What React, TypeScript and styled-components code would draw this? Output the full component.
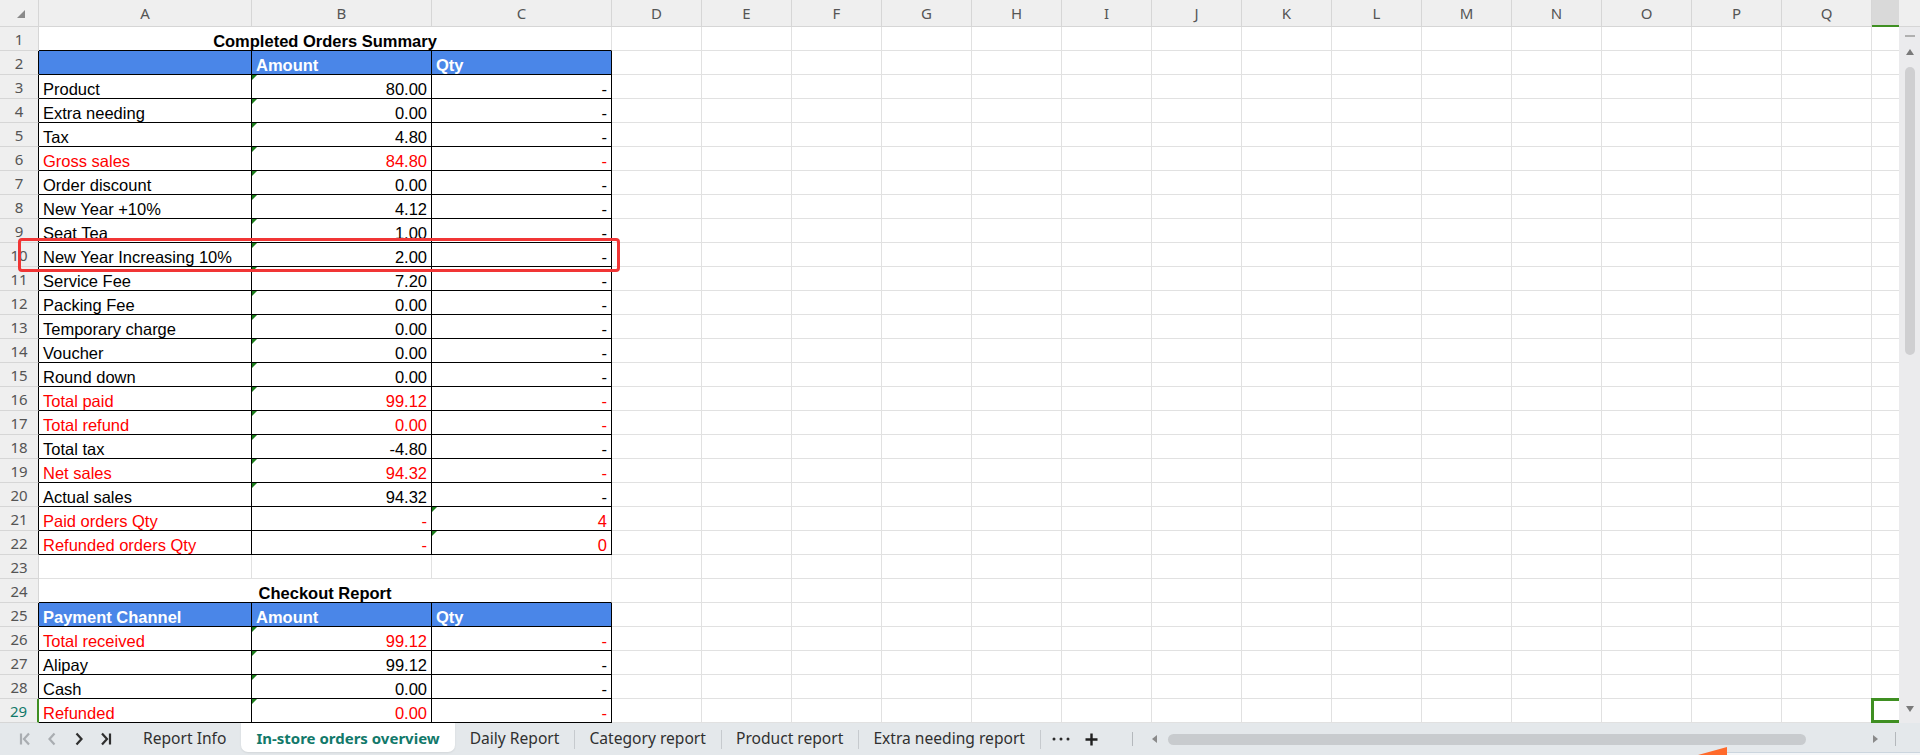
import React from "react";
import styled, { createGlobalStyle, css } from "styled-components";

const GRID = "#e1e1e1";
const BLACK = "#000000";
const HEAD_BG = "#efefef";
const HEAD_LINE = "#d6d6d6";
const BLUE = "#4a86e8";
const RED = "#ff0000";
const GREEN = "#3f8f22";
const TEAL = "#12796a";

const GlobalStyle = createGlobalStyle`
  html, body {
    margin: 0;
    padding: 0;
    background: #ffffff;
    overflow: hidden;
  }
  body {
    font-family: "Liberation Sans", Arial, sans-serif;
  }
`;

const Window = styled.div`
  position: relative;
  width: 1920px;
  height: 755px;
  display: flex;
  flex-direction: column;
  overflow: hidden;
`;

const SheetArea = styled.div`
  display: flex;
  height: 723px;
`;

const Grid = styled.div`
  display: grid;
  grid-template-columns: 39px 213px 180px 180px repeat(14, 90px) 27px;
  grid-template-rows: 27px repeat(29, 24px);
  width: 1899px;
  overflow: hidden;
`;

const Corner = styled.div`
  box-sizing: border-box;
  background: ${HEAD_BG};
  border-right: 1px solid ${HEAD_LINE};
  border-bottom: 1px solid ${HEAD_LINE};
  position: relative;

  &::after {
    content: "";
    position: absolute;
    left: 17px;
    top: 10px;
    width: 0;
    height: 0;
    border-left: 8px solid transparent;
    border-bottom: 8px solid #8a8a8a;
  }
`;

const ColHead = styled.div<{ $selected?: boolean }>`
  box-sizing: border-box;
  display: flex;
  align-items: center;
  justify-content: center;
  background: ${(p) => (p.$selected ? "#d9d9d9" : HEAD_BG)};
  border-right: ${(p) => (p.$selected ? "none" : `1px solid ${HEAD_LINE}`)};
  border-bottom: ${(p) => (p.$selected ? `2px solid ${GREEN}` : `1px solid ${HEAD_LINE}`)};
  font-family: "Noto Sans", "Open Sans", sans-serif;
  font-size: 15px;
  color: #555555;
`;

const RowHead = styled.div<{ $edge?: string; $wide?: boolean; $active?: boolean }>`
  box-sizing: border-box;
  display: flex;
  align-items: center;
  justify-content: center;
  background: ${HEAD_BG};
  border-right: ${(p) => (p.$wide ? 2 : 1)}px solid ${(p) => p.$edge ?? HEAD_LINE};
  border-bottom: 1px solid ${HEAD_LINE};
  font-family: "Noto Sans", "Open Sans", sans-serif;
  font-size: 15px;
  color: ${(p) => (p.$active ? TEAL : "#555555")};
`;

type Align = "left" | "right" | "center";

const Cell = styled.div<{
  $right?: string;
  $bottom?: string;
  $bg?: string;
  $align?: Align;
  $red?: boolean;
  $bold?: boolean;
  $white?: boolean;
  $span?: number;
  $open?: boolean;
}>`
  box-sizing: border-box;
  position: relative;
  display: flex;
  align-items: flex-end;
  justify-content: ${(p) =>
    p.$align === "right" ? "flex-end" : p.$align === "center" ? "center" : "flex-start"};
  padding: 0 4px 0 4px;
  background: ${(p) => p.$bg ?? "#ffffff"};
  border-right: ${(p) => (p.$open ? "none" : `1px solid ${p.$right ?? GRID}`)};
  border-bottom: 1px solid ${(p) => p.$bottom ?? GRID};
  font-size: 16.5px;
  line-height: 18px;
  font-weight: ${(p) => (p.$bold ? 700 : 400)};
  color: ${(p) => (p.$white ? "#ffffff" : p.$red ? RED : "#000000")};
  white-space: nowrap;
  overflow: visible;
  ${(p) =>
    p.$span &&
    css`
      grid-column: span ${p.$span};
    `}
`;

const TextMark = styled.span`
  position: absolute;
  left: 0;
  top: 0;
  width: 0;
  height: 0;
  border-top: 5px solid #1b7d1b;
  border-right: 5px solid transparent;
`;

const Selection = styled.span`
  position: absolute;
  left: -1px;
  top: -1px;
  right: -3px;
  bottom: -1px;
  border: 3px solid ${GREEN};
  pointer-events: none;
`;

const VScroll = styled.div`
  width: 21px;
  display: flex;
  flex-direction: column;
`;

const VScrollHead = styled.div`
  box-sizing: border-box;
  height: 27px;
  background: ${HEAD_BG};
  border-bottom: 1px solid ${HEAD_LINE};
`;

const VTrack = styled.div`
  flex: 1;
  background: #ebebed;
  display: flex;
  flex-direction: column;
  align-items: center;
`;

const SplitDash = styled.div`
  width: 10px;
  height: 2px;
  margin-top: 8px;
  background: #b0b0b0;
`;

const Arrow = styled.div<{ $dir: "up" | "down" | "left" | "right" }>`
  width: 0;
  height: 0;
  ${(p) =>
    p.$dir === "up"
      ? css`
          border-left: 4px solid transparent;
          border-right: 4px solid transparent;
          border-bottom: 6px solid #7a7a7a;
        `
      : p.$dir === "down"
      ? css`
          border-left: 4px solid transparent;
          border-right: 4px solid transparent;
          border-top: 6px solid #7a7a7a;
        `
      : p.$dir === "left"
      ? css`
          border-top: 4px solid transparent;
          border-bottom: 4px solid transparent;
          border-right: 5px solid #8a8a8a;
        `
      : css`
          border-top: 4px solid transparent;
          border-bottom: 4px solid transparent;
          border-left: 5px solid #8a8a8a;
        `}
`;

const UpArrow = styled(Arrow)`
  margin-top: 12px;
`;

const VThumb = styled.div`
  width: 10px;
  height: 288px;
  margin-top: 12px;
  border-radius: 5px;
  background: #cfcfd1;
`;

const Spacer = styled.div`
  flex: 1;
`;

const DownArrow = styled(Arrow)`
  margin-bottom: 11px;
`;

const TabBar = styled.div`
  height: 32px;
  display: flex;
  align-items: flex-start;
  background: #e4e8eb;
  font-family: "Noto Sans", "Open Sans", sans-serif;
`;

const Nav = styled.div`
  display: flex;
  padding-left: 11px;
  height: 32px;
  align-items: center;
`;

const NavBtn = styled.div<{ $off?: boolean }>`
  width: 27px;
  height: 32px;
  display: flex;
  align-items: center;
  justify-content: center;
  color: ${(p) => (p.$off ? "#a9adb1" : "#2f2f2f")};
`;

const Tabs = styled.div`
  display: flex;
  margin-left: 9px;
`;

const Tab = styled.div<{ $active?: boolean; $sep?: boolean }>`
  position: relative;
  height: 29px;
  padding: 0 15px;
  display: flex;
  align-items: center;
  font-size: 15.6px;
  color: #303030;
  white-space: nowrap;

  ${(p) =>
    p.$active &&
    css`
      background: #ffffff;
      border-radius: 0 0 7px 7px;
      color: ${TEAL};
      font-size: 15px;
      font-weight: 700;
      box-shadow: 0 1px 2px rgba(0, 0, 0, 0.08);
    `}

  ${(p) =>
    p.$sep &&
    css`
      &::after {
        content: "";
        position: absolute;
        right: -1px;
        top: 7px;
        width: 1px;
        height: 19px;
        background: #c6cace;
      }
    `}
`;

const TabTool = styled.div<{ $gap: number }>`
  height: 32px;
  display: flex;
  align-items: center;
  margin-left: ${(p) => p.$gap}px;
  color: #2a2a2a;
`;

const HScroll = styled.div`
  margin-left: auto;
  width: 795px;
  height: 32px;
  display: flex;
  align-items: center;
`;

const Divider = styled.div<{ $gap: number }>`
  width: 1px;
  height: 14px;
  margin-left: ${(p) => p.$gap}px;
  background: #b4b8bc;
`;

const HThumb = styled.div`
  width: 638px;
  height: 11px;
  margin-left: 11px;
  border-radius: 6px;
  background: #c8cbce;
`;

const LeftArrow = styled(Arrow)`
  margin-left: 19px;
`;

const RightArrow = styled(Arrow)`
  margin-left: 67px;
`;

const Highlight = styled.div`
  position: absolute;
  left: 18px;
  top: 238px;
  width: 602px;
  height: 34px;
  box-sizing: border-box;
  border: 3px solid #f13535;
  border-radius: 4px;
  pointer-events: none;
`;

const Pointer = styled.svg`
  position: absolute;
  left: 1696px;
  top: 746px;
`;

const PopupEdge = styled.div`
  position: absolute;
  left: 1727px;
  top: 752px;
  width: 193px;
  height: 3px;
  border-top: 1px solid #cbd5de;
  background: #f4f6f8;
`;

type Kind = "title" | "head" | "data" | "blank";

interface SheetRow {
  kind: Kind;
  a?: string;
  b?: string;
  c?: string;
  red?: boolean;
  mark?: "b" | "c";
}

const rows: SheetRow[] = [
  { kind: "title", a: "Completed Orders Summary" },
  { kind: "head", a: "", b: "Amount", c: "Qty" },
  { kind: "data", a: "Product", b: "80.00", c: "-", mark: "b" },
  { kind: "data", a: "Extra needing", b: "0.00", c: "-", mark: "b" },
  { kind: "data", a: "Tax", b: "4.80", c: "-", mark: "b" },
  { kind: "data", a: "Gross sales", b: "84.80", c: "-", mark: "b", red: true },
  { kind: "data", a: "Order discount", b: "0.00", c: "-", mark: "b" },
  { kind: "data", a: "New Year +10%", b: "4.12", c: "-", mark: "b" },
  { kind: "data", a: "Seat Tea", b: "1.00", c: "-", mark: "b" },
  { kind: "data", a: "New Year Increasing 10%", b: "2.00", c: "-", mark: "b" },
  { kind: "data", a: "Service Fee", b: "7.20", c: "-", mark: "b" },
  { kind: "data", a: "Packing Fee", b: "0.00", c: "-", mark: "b" },
  { kind: "data", a: "Temporary charge", b: "0.00", c: "-", mark: "b" },
  { kind: "data", a: "Voucher", b: "0.00", c: "-", mark: "b" },
  { kind: "data", a: "Round down", b: "0.00", c: "-", mark: "b" },
  { kind: "data", a: "Total paid", b: "99.12", c: "-", mark: "b", red: true },
  { kind: "data", a: "Total refund", b: "0.00", c: "-", mark: "b", red: true },
  { kind: "data", a: "Total tax", b: "-4.80", c: "-", mark: "b" },
  { kind: "data", a: "Net sales", b: "94.32", c: "-", mark: "b", red: true },
  { kind: "data", a: "Actual sales", b: "94.32", c: "-", mark: "b" },
  { kind: "data", a: "Paid orders Qty", b: "-", c: "4", mark: "c", red: true },
  { kind: "data", a: "Refunded orders Qty", b: "-", c: "0", mark: "c", red: true },
  { kind: "blank" },
  { kind: "title", a: "Checkout Report" },
  { kind: "head", a: "Payment Channel", b: "Amount", c: "Qty" },
  { kind: "data", a: "Total received", b: "99.12", c: "-", mark: "b", red: true },
  { kind: "data", a: "Alipay", b: "99.12", c: "-", mark: "b" },
  { kind: "data", a: "Cash", b: "0.00", c: "-", mark: "b" },
  { kind: "data", a: "Refunded", b: "0.00", c: "-", mark: "b", red: true },
];

const letters = ["A", "B", "C", "D", "E", "F", "G", "H", "I", "J", "K", "L", "M", "N", "O", "P", "Q"];
const emptyCols = letters.slice(3);

const sheets = [
  "Report Info",
  "In-store orders overview",
  "Daily Report",
  "Category report",
  "Product report",
  "Extra needing report",
];
const activeSheet = 1;

function NavIcon({ kind }: { kind: "first" | "prev" | "next" | "last" }) {
  const paths: Record<string, string[]> = {
    first: ["M3 1.5v11", "M11 1.5L6 7l5 5.5"],
    prev: ["M9.5 1.5L4.5 7l5 5.5"],
    next: ["M4.5 1.5L9.5 7l-5 5.5"],
    last: ["M3 1.5L8 7l-5 5.5", "M11 1.5v11"],
  };
  return (
    <svg width="14" height="14" viewBox="0 0 14 14" fill="none" stroke="currentColor" strokeWidth="2.2">
      {paths[kind].map((d) => (
        <path key={d} d={d} />
      ))}
    </svg>
  );
}

function SheetRowView({ row, n }: { row: SheetRow; n: number }) {
  const inTable = row.kind === "head" || row.kind === "data";
  const last = n === 29;
  const edge = last ? GREEN : inTable ? BLACK : undefined;

  let main: React.ReactNode;
  if (row.kind === "title") {
    main = (
      <Cell $span={3} $align="center" $bold $bottom={BLACK}>
        {row.a}
      </Cell>
    );
  } else if (row.kind === "head") {
    main = (
      <>
        <Cell $bg={BLUE} $white $bold $right={BLACK} $bottom={BLACK}>
          {row.a}
        </Cell>
        <Cell $bg={BLUE} $white $bold $right={BLACK} $bottom={BLACK}>
          {row.b}
        </Cell>
        <Cell $bg={BLUE} $white $bold $right={BLACK} $bottom={BLACK}>
          {row.c}
        </Cell>
      </>
    );
  } else if (row.kind === "data") {
    main = (
      <>
        <Cell $red={row.red} $right={BLACK} $bottom={BLACK}>
          {row.a}
        </Cell>
        <Cell $red={row.red} $align="right" $right={BLACK} $bottom={BLACK}>
          {row.mark === "b" && <TextMark />}
          {row.b}
        </Cell>
        <Cell $red={row.red} $align="right" $right={BLACK} $bottom={BLACK}>
          {row.mark === "c" && <TextMark />}
          {row.c}
        </Cell>
      </>
    );
  } else {
    main = (
      <>
        <Cell />
        <Cell />
        <Cell />
      </>
    );
  }

  return (
    <>
      <RowHead $edge={edge} $wide={last} $active={last}>
        {n}
      </RowHead>
      {main}
      {emptyCols.map((c) => (
        <Cell key={c} />
      ))}
      <Cell $open>{last && <Selection />}</Cell>
    </>
  );
}

export default function App() {
  return (
    <>
      <GlobalStyle />
      <Window>
        <SheetArea>
          <Grid>
            <Corner />
            {letters.map((l) => (
              <ColHead key={l}>{l}</ColHead>
            ))}
            <ColHead $selected />
            {rows.map((r, i) => (
              <SheetRowView key={i} row={r} n={i + 1} />
            ))}
          </Grid>
          <VScroll>
            <VScrollHead />
            <VTrack>
              <SplitDash />
              <UpArrow $dir="up" />
              <VThumb />
              <Spacer />
              <DownArrow $dir="down" />
            </VTrack>
          </VScroll>
        </SheetArea>

        <TabBar>
          <Nav>
            <NavBtn $off>
              <NavIcon kind="first" />
            </NavBtn>
            <NavBtn $off>
              <NavIcon kind="prev" />
            </NavBtn>
            <NavBtn>
              <NavIcon kind="next" />
            </NavBtn>
            <NavBtn>
              <NavIcon kind="last" />
            </NavBtn>
          </Nav>
          <Tabs>
            {sheets.map((s, i) => (
              <Tab
                key={s}
                $active={i === activeSheet}
                $sep={i !== activeSheet && i + 1 !== activeSheet}
              >
                {s}
              </Tab>
            ))}
          </Tabs>
          <TabTool $gap={12}>
            <svg width="18" height="4" viewBox="0 0 18 4">
              <circle cx="2" cy="2" r="1.5" fill="#2a2a2a" />
              <circle cx="9" cy="2" r="1.5" fill="#2a2a2a" />
              <circle cx="16" cy="2" r="1.5" fill="#2a2a2a" />
            </svg>
          </TabTool>
          <TabTool $gap={15}>
            <svg width="13" height="13" viewBox="0 0 13 13" stroke="#1f1f1f" strokeWidth="2.4">
              <path d="M6.5 0.5v12M0.5 6.5h12" />
            </svg>
          </TabTool>
          <HScroll>
            <Divider $gap={7} />
            <LeftArrow $dir="left" />
            <HThumb />
            <RightArrow $dir="right" />
            <Divider $gap={17} />
          </HScroll>
        </TabBar>

        <Highlight />
        <Pointer width="32" height="9" viewBox="0 0 32 9">
          <polygon points="2,9 31,1 31,9" fill="#ff6a2b" />
        </Pointer>
        <PopupEdge />
      </Window>
    </>
  );
}
